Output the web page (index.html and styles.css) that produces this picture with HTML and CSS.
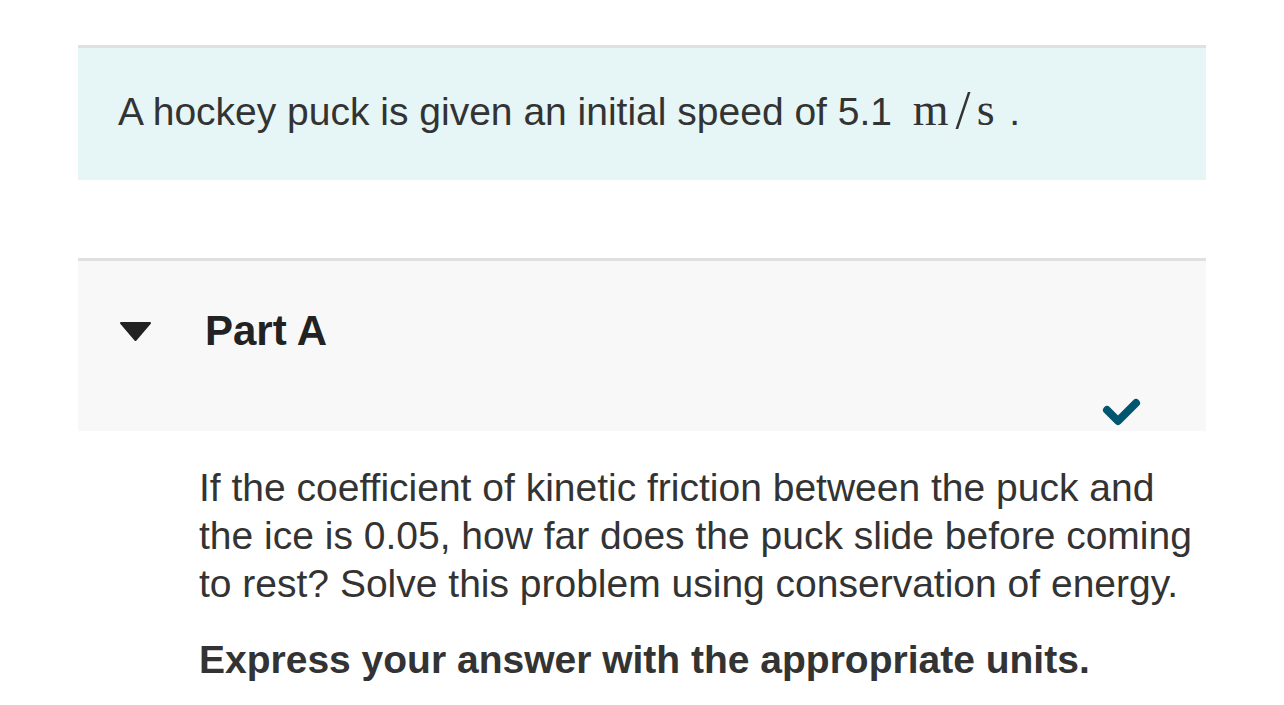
FILE: index.html
```html
<!DOCTYPE html>
<html>
<head>
<meta charset="utf-8">
<link rel="stylesheet" href="styles.css">
</head>
<body>
<div class="page">
  <div class="intro">
    <p class="intro-text">A hockey puck is given an initial speed of 5.1 <span class="math"><span class="mi">m</span><span class="slash">/</span><span class="mi">s</span></span> .</p>
  </div>

  <div class="part">
    <div class="part-header">
      <div class="part-title-row">
        <svg class="caret" width="33" height="21" viewBox="0 0 33 21"><polygon points="2,2 31,2 16.5,19" fill="#222" stroke="#222" stroke-width="2" stroke-linejoin="round"/></svg>
        <h2 class="part-title">Part A</h2>
      </div>
      <div class="status-row">
        <svg class="check" width="42" height="32" viewBox="0 0 42 32"><polyline points="7,13 18,24 36,6" fill="none" stroke="#00566e" stroke-width="8" stroke-linecap="round" stroke-linejoin="round"/></svg>
      </div>
    </div>
    <div class="part-body">
      <p class="question">If the coefficient of kinetic friction between the puck and the ice is 0.05, how far does the puck slide before coming to rest? Solve this problem using conservation of energy.</p>
      <p class="instruction">Express your answer with the appropriate units.</p>
    </div>
  </div>
</div>
</body>
</html>
```

FILE: styles.css
```css
html, body {
  margin: 0;
  padding: 0;
  background: #ffffff;
}

body {
  font-family: "Liberation Sans", Arial, Helvetica, sans-serif;
  color: #333333;
}

.page {
  margin-left: 78px;
  width: 1128px;
  padding-top: 45px;
}

.intro {
  border-top: 3px solid #e0e0e0;
  background: #e6f6f6;
  padding: 40px 40px 44px 40px;
}

.intro-text {
  margin: 0;
  font-size: 39px;
  line-height: 48px;
  color: #333333;
}

.math {
  font-family: "Liberation Serif", "Times New Roman", serif;
  font-size: 46px;
  line-height: 0;
  margin-left: 10px;
  margin-right: 4px;
}

.slash {
  font-size: 54px;
  margin: 0 6px 0 7px;
  position: relative;
  top: 3px;
}

.part {
  margin-top: 78px;
}

.part-header {
  border-top: 3px solid #e0e0e0;
  background: #f8f8f8;
  padding: 45px 0 2px 0;
  display: flex;
  flex-direction: column;
}

.part-title-row {
  display: flex;
  align-items: center;
  padding-left: 41px;
}

.caret {
  display: block;
  margin-top: 0;
}

.part-title {
  margin: 0 0 0 53px;
  font-size: 42px;
  line-height: 50px;
  font-weight: bold;
  color: #222222;
}

.status-row {
  display: flex;
  justify-content: flex-end;
  padding-right: 64px;
  margin-top: 41px;
}

.check {
  display: block;
}

.part-body {
  padding: 33px 0 0 121px;
}

.question {
  margin: 0;
  font-size: 39px;
  line-height: 48px;
  color: #333333;
}

.instruction {
  margin: 28px 0 0 0;
  font-size: 39px;
  line-height: 48px;
  font-weight: bold;
  color: #333333;
}
```
